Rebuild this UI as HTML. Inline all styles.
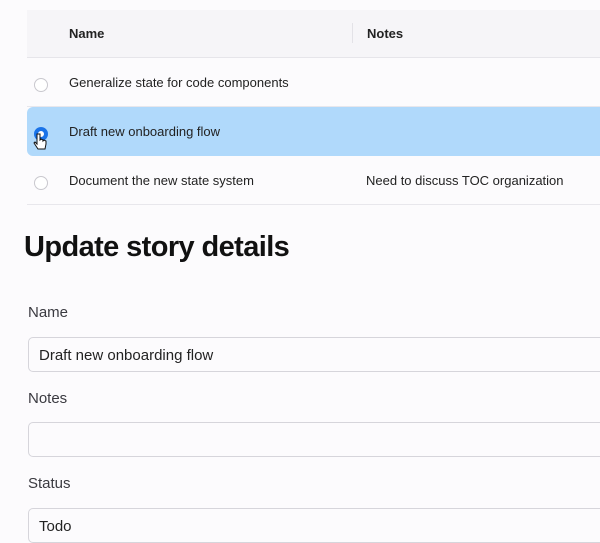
<!DOCTYPE html>
<html><head><meta charset="utf-8"><style>
*{box-sizing:border-box;margin:0;padding:0}
body{width:600px;height:529px;overflow:hidden;background:#fcfbfd;font-family:"Liberation Sans",Arial,sans-serif;color:#1b1b1f;position:relative}
.abs{position:absolute}
.hdr{left:27px;top:10px;width:580px;height:48px;background:#f6f5f8;border-bottom:1px solid #e6e5ea}
.hdr b{position:absolute;top:16px;font-size:13px;font-weight:bold;color:#222}
.sep{position:absolute;left:325px;top:13px;width:1px;height:20px;background:#e3e2e7}
.row{left:27px;width:580px;height:49px;border-bottom:1px solid #e8e7ec}
.row span{position:absolute;left:42px;top:17px;font-size:13px;color:#222}
.row .n{left:339px}
.radio{position:absolute;left:7px;top:20px;width:14px;height:14px;border:1px solid #c9c8ce;border-radius:50%;background:#fff}
.sel{background:#b0d9fb;border-radius:6px 0 0 6px;border-bottom:none}
.sel .radio{border:4px solid #1a73e8;background:#fff}
h1{position:absolute;left:24px;top:231px;font-size:29px;font-weight:bold;color:#111;letter-spacing:-0.6px}
.lbl{position:absolute;left:28px;font-size:15px;color:#3a3a40}
.inp{position:absolute;left:28px;width:600px;height:35px;border:1px solid #d6d5db;border-radius:5px;background:#fcfbfd;font-size:15px;padding:9px 10px;color:#222}
</style></head><body>
<div class="abs hdr"><b style="left:42px">Name</b><div class="sep"></div><b style="left:340px">Notes</b></div>
<div class="abs row" style="top:58px"><div class="radio"></div><span>Generalize state for code components</span></div>
<div class="abs row sel" style="top:107px"><div class="radio"></div><span>Draft new onboarding flow</span></div>
<div class="abs row" style="top:156px"><div class="radio"></div><span>Document the new state system</span><span class="n">Need to discuss TOC organization</span></div>
<svg class="abs" style="left:33px;top:132px" width="16" height="20" viewBox="0 0 16 20"><path d="M4 2v10l-2-2-1 1 4 6h7l1-5v-3l-2-1-1 1v-1l-2-1-1 1V2z" fill="#fff" stroke="#111" stroke-width="1"/></svg>
<h1>Update story details</h1>
<div class="lbl" style="top:304px">Name</div>
<div class="inp" style="top:337px">Draft new onboarding flow</div>
<div class="lbl" style="top:390px">Notes</div>
<div class="inp" style="top:422px"></div>
<div class="lbl" style="top:475px">Status</div>
<div class="inp" style="top:508px">Todo</div>
</body></html>
